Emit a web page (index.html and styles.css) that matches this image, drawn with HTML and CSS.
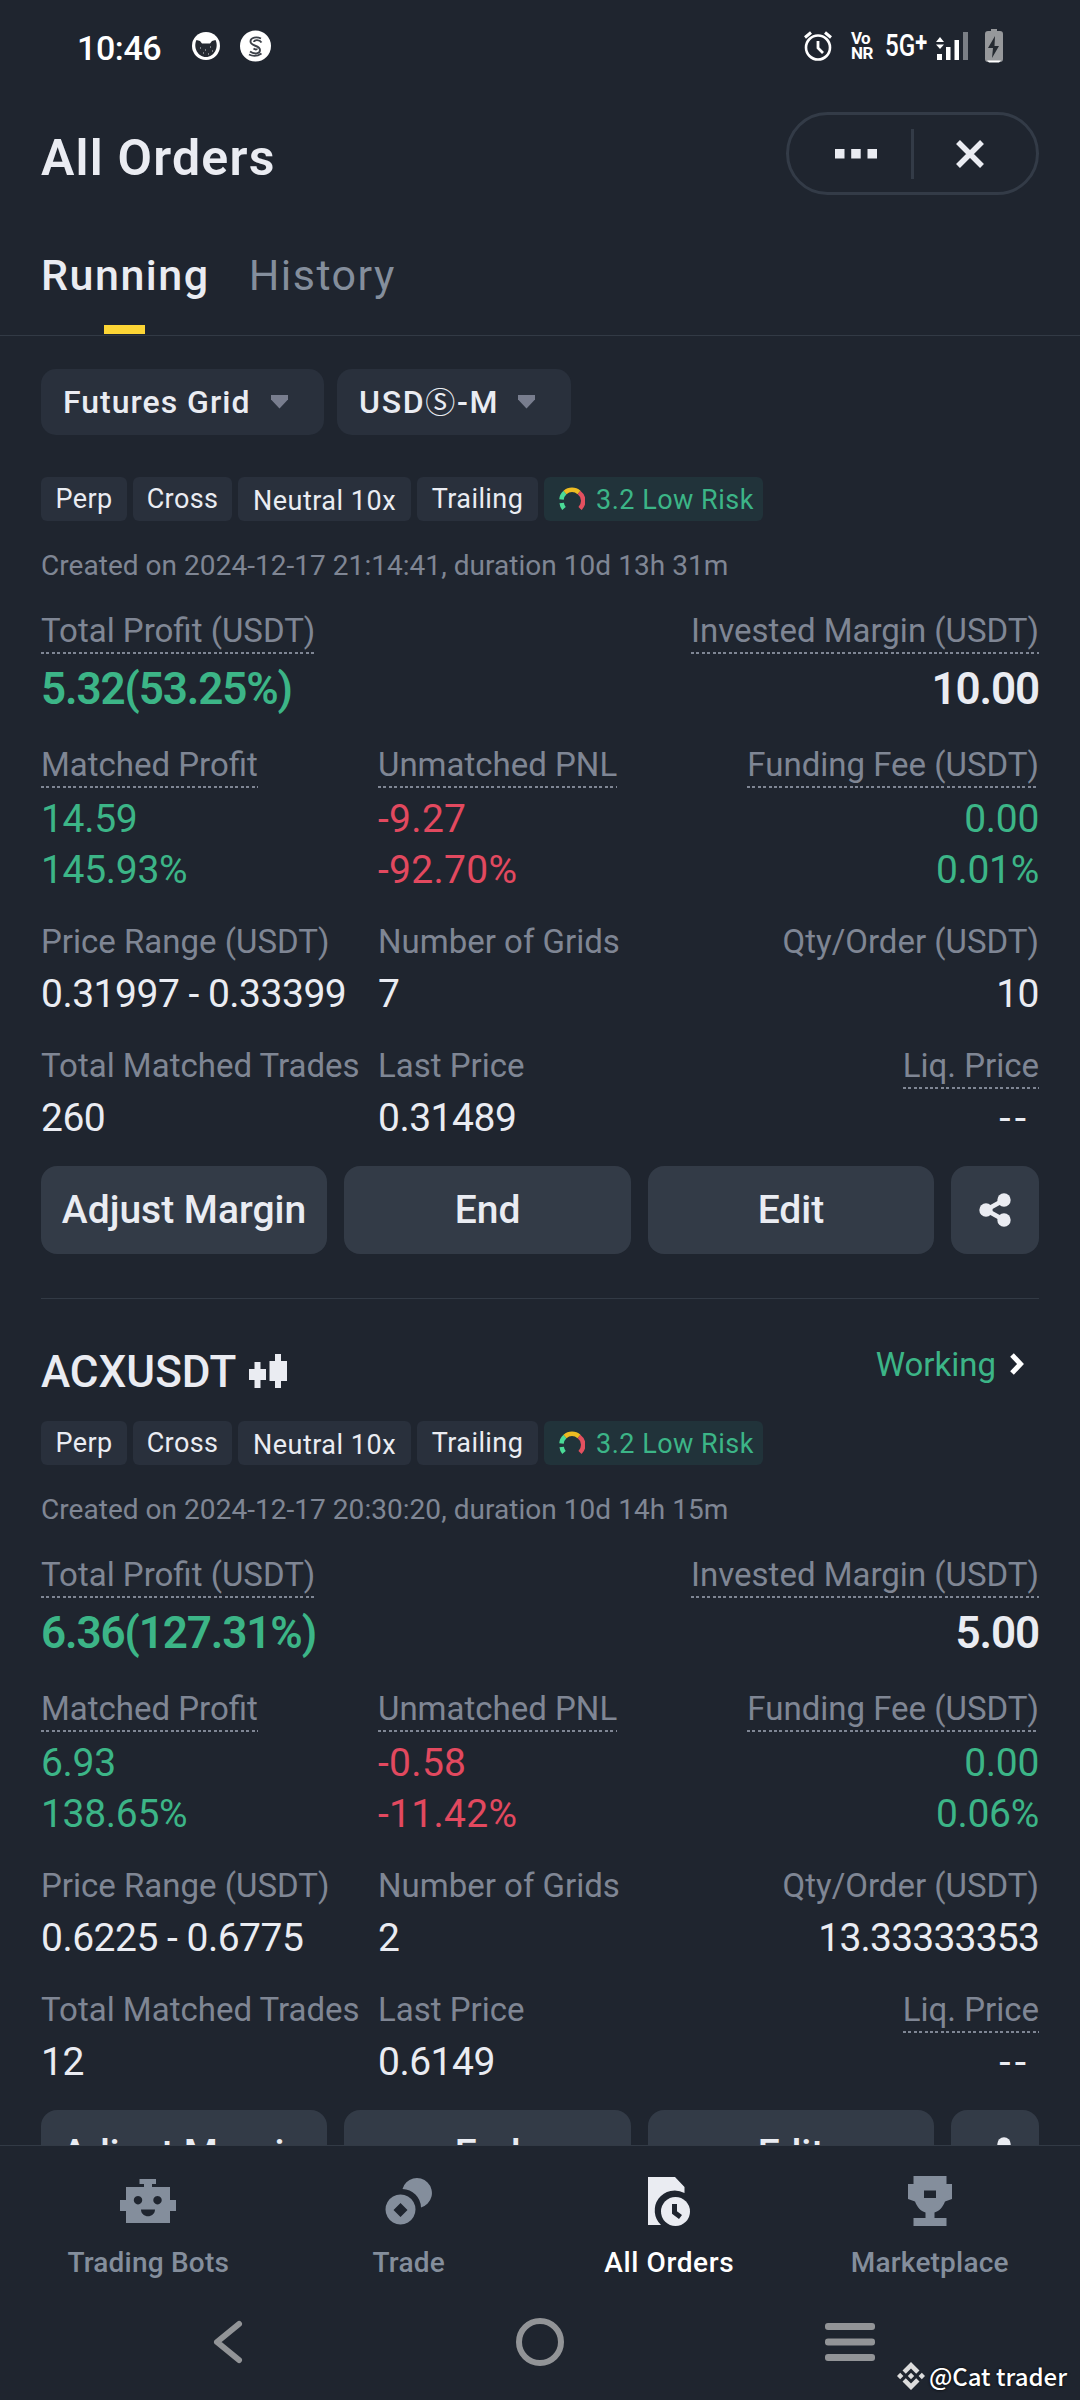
FILE: index.html
```html
<!DOCTYPE html>
<html lang="en">
<head>
    <meta charset="UTF-8">
    <meta name="viewport" content="width=device-width, initial-scale=1.0">
    <title>All Orders</title>
    <link rel="stylesheet" href="styles.css">
</head>
<body>
    <!-- Status bar -->
    <div class="status-bar">
        <span class="clock">10:46</span>
        <svg class="cat-icon" width="28" height="30" viewBox="0 0 28 30">
            <circle cx="14" cy="15" r="14" fill="#fff"/>
            <path d="M4.500 9l3.500 1 2 2.500h8l2-2.500 3.500-1c3.500 7-1 17-9.500 17S1 16 4.500 9z" fill="#252a32"/>
            <path d="M8 17h1M13 19h1M18 16h1M11 22h1M16 23h1M20 20h1" stroke="#cfd1d4" stroke-width="1.200"/>
        </svg>
        <svg class="coin-icon" width="31" height="32" viewBox="0 0 31 32">
            <circle cx="15.500" cy="16" r="15.500" fill="#fff"/>
            <path d="M21 8.500C17 6.500 10.500 7 10.500 11.500c0 5 9.500 3.500 9.500 8.500 0 4-6 4.500-10 1.500M21.500 12.500c-2-3-7.500-3-7.500-.6M9 24.500c4 2 8 2 12.500-1M13.500 18.500c2 1.500 3.500 1 3.500 0" fill="none" stroke="#3c4149" stroke-width="1.900"/>
        </svg>
        <div class="status-right">
            <svg width="28" height="30" viewBox="0 0 28 30" fill="none" stroke="#fff">
                <circle cx="14" cy="16.500" r="12" stroke-width="2.600"/>
                <path d="M14 10v7l5 5" stroke-width="2.800"/>
                <path d="M1 6.500 7 1.500M27 6.500 21 1.500" stroke-width="3"/>
            </svg>
            <div class="vonr"><span>Vo</span><span>NR</span></div>
            <span class="net">5G<b>+</b></span>
            <svg class="signal" width="32" height="29" viewBox="0 0 32 29" fill="#fff">
                <path d="M0 10l4-5 4 5zM0 12.500h8l-4 4.500z"/>
                <path d="M1 22h5v6H1zM10 15h4.500v13H10zM18.500 8H23v20h-4.500z"/>
                <path d="M27 0h5v28h-5z" fill="#7a7e85"/>
            </svg>
            <svg class="battery" width="18" height="34" viewBox="0 0 18 34">
                <path d="M6 0h6v2h3a3 3 0 0 1 3 3v25a3 3 0 0 1-3 3H3a3 3 0 0 1-3-3V5a3 3 0 0 1 3-3h3z" fill="#96989b"/>
                <path d="M2 31.500h14l-2 2H4z" fill="#fff"/>
                <path d="M10 7 3 19h5l-1 10 7-12H9.500z" fill="#252a31"/>
            </svg>
        </div>
    </div>

    <!-- Page header -->
    <div class="header">
        <h1>All Orders</h1>
        <div class="capsule">
            <svg class="dots" width="42" height="10" viewBox="0 0 42 10" fill="#eaecf2"><path d="M0 0h9.500v9.500H0zM16.200 0h9.500v9.500h-9.500zM32.500 0H42v9.500h-9.500z"/></svg>
            <span class="capsule-line"></span>
            <svg class="close" width="28" height="28" viewBox="0 0 28 28"><path d="M2 2l24 24M26 2L2 26" stroke="#eaecf2" stroke-width="5.500"/></svg>
        </div>
    </div>

    <div class="tabs">
        <div class="tab active">Running</div>
        <div class="tab">History</div>
    </div>

    <div class="content">
        <div class="filters">
            <div class="filter filter-type"><span>Futures Grid</span><svg width="17" height="14" viewBox="0 0 17 14"><path d="M0 0h17v4.500L8.500 13.500 0 4.500z" fill="#787d8e"/></svg></div>
            <div class="filter filter-coin"><span>USD<i>Ⓢ</i>-M</span><svg width="17" height="14" viewBox="0 0 17 14"><path d="M0 0h17v4.500L8.500 13.500 0 4.500z" fill="#787d8e"/></svg></div>
        </div>

        <div class="card">
            <div class="tags">
                <span class="tag perp">Perp</span>
                <span class="tag cross">Cross</span>
                <span class="tag low neutral">Neutral 10x</span>
                <span class="tag trailing">Trailing</span>
                <span class="tag low risk">
                    <svg width="26" height="24" viewBox="0 0 26 24" fill="none" stroke-width="4.500">
                        <path d="M5 21.500A10.500 10.500 0 0 1 2.700 16" stroke="#4bdb97"/>
                        <path d="M2.500 12.500A10.500 10.500 0 0 1 6 5.500" stroke="#4bdb97"/>
                        <path d="M6 5.500A10.500 10.500 0 0 1 20 5.500" stroke="#eebc22"/>
                        <path d="M20 5.500A10.500 10.500 0 0 1 21 21.500" stroke="#e3505f"/>
                    </svg>
                    <em>3.2 Low Risk</em>
                </span>
            </div>
            <p class="created">Created on 2024-12-17 21:14:41, duration 10d 13h 31m</p>

            <div class="row totals">
                <div class="cell"><span class="label dashed">Total Profit (USDT)</span><span class="value green">5.32(53.25%)</span></div>
                <div class="cell right"><span class="label dashed">Invested Margin (USDT)</span><span class="value">10.00</span></div>
            </div>
            <div class="row pnl">
                <div class="cell"><span class="label dashed">Matched Profit</span><span class="value green">14.59</span><span class="value green">145.93%</span></div>
                <div class="cell"><span class="label dashed">Unmatched PNL</span><span class="value red">-9.27</span><span class="value red">-92.70%</span></div>
                <div class="cell right"><span class="label dashed">Funding Fee (USDT)</span><span class="value green">0.00</span><span class="value green">0.01%</span></div>
            </div>
            <div class="row">
                <div class="cell"><span class="label">Price Range (USDT)</span><span class="value">0.31997 - 0.33399</span></div>
                <div class="cell"><span class="label">Number of Grids</span><span class="value">7</span></div>
                <div class="cell right"><span class="label">Qty/Order (USDT)</span><span class="value">10</span></div>
            </div>
            <div class="row">
                <div class="cell"><span class="label">Total Matched Trades</span><span class="value">260</span></div>
                <div class="cell"><span class="label">Last Price</span><span class="value">0.31489</span></div>
                <div class="cell right"><span class="label dashed">Liq. Price</span><span class="value none">--</span></div>
            </div>

            <div class="actions">
                <button>Adjust Margin</button>
                <button>End</button>
                <button>Edit</button>
                <button class="share"><svg width="32" height="34" viewBox="0 0 32 34" fill="#eaecf2"><path d="M25 7 7 17l18 10" fill="none" stroke="#eaecf2" stroke-width="4.500"/><circle cx="25" cy="7" r="6.700"/><circle cx="7" cy="17" r="6.700"/><circle cx="25" cy="27" r="6.700"/></svg></button>
            </div>
        </div>

        <div class="card">
            <div class="card-head">
                <h2>ACXUSDT</h2>
                <svg class="candles" width="38" height="34" viewBox="0 0 38 34" fill="#eaecf2"><path d="M5.500 8h6v7H17v11h-5.500v8h-6v-8H0V15h5.500zM26 0h6v7h6v20h-6v7h-6v-7h-5.500V7H26z"/></svg>
                <span class="working">Working</span>
                <svg class="chevron" width="14" height="22" viewBox="0 0 14 22"><path d="M2 2l8.500 9L2 20" fill="none" stroke="#fff" stroke-width="5"/></svg>
            </div>
            <div class="tags">
                <span class="tag perp">Perp</span>
                <span class="tag cross">Cross</span>
                <span class="tag low neutral">Neutral 10x</span>
                <span class="tag trailing">Trailing</span>
                <span class="tag low risk">
                    <svg width="26" height="24" viewBox="0 0 26 24" fill="none" stroke-width="4.500">
                        <path d="M5 21.500A10.500 10.500 0 0 1 2.700 16" stroke="#4bdb97"/>
                        <path d="M2.500 12.500A10.500 10.500 0 0 1 6 5.500" stroke="#4bdb97"/>
                        <path d="M6 5.500A10.500 10.500 0 0 1 20 5.500" stroke="#eebc22"/>
                        <path d="M20 5.500A10.500 10.500 0 0 1 21 21.500" stroke="#e3505f"/>
                    </svg>
                    <em>3.2 Low Risk</em>
                </span>
            </div>
            <p class="created">Created on 2024-12-17 20:30:20, duration 10d 14h 15m</p>

            <div class="row totals">
                <div class="cell"><span class="label dashed">Total Profit (USDT)</span><span class="value green">6.36(127.31%)</span></div>
                <div class="cell right"><span class="label dashed">Invested Margin (USDT)</span><span class="value">5.00</span></div>
            </div>
            <div class="row pnl">
                <div class="cell"><span class="label dashed">Matched Profit</span><span class="value green">6.93</span><span class="value green">138.65%</span></div>
                <div class="cell"><span class="label dashed">Unmatched PNL</span><span class="value red">-0.58</span><span class="value red">-11.42%</span></div>
                <div class="cell right"><span class="label dashed">Funding Fee (USDT)</span><span class="value green">0.00</span><span class="value green">0.06%</span></div>
            </div>
            <div class="row">
                <div class="cell"><span class="label">Price Range (USDT)</span><span class="value">0.6225 - 0.6775</span></div>
                <div class="cell"><span class="label">Number of Grids</span><span class="value">2</span></div>
                <div class="cell right"><span class="label">Qty/Order (USDT)</span><span class="value long">13.33333353</span></div>
            </div>
            <div class="row">
                <div class="cell"><span class="label">Total Matched Trades</span><span class="value">12</span></div>
                <div class="cell"><span class="label">Last Price</span><span class="value">0.6149</span></div>
                <div class="cell right"><span class="label dashed">Liq. Price</span><span class="value none">--</span></div>
            </div>

            <div class="actions">
                <button>Adjust Margin</button>
                <button>End</button>
                <button>Edit</button>
                <button class="share"><svg width="32" height="34" viewBox="0 0 32 34" fill="#eaecf2"><path d="M25 7 7 17l18 10" fill="none" stroke="#eaecf2" stroke-width="4.500"/><circle cx="25" cy="7" r="6.700"/><circle cx="7" cy="17" r="6.700"/><circle cx="25" cy="27" r="6.700"/></svg></button>
            </div>
        </div>
    </div>

    <!-- Bottom navigation -->
    <div class="bottom-nav">
        <div class="nav-item">
            <svg width="56" height="50" viewBox="0 0 56 50" fill="#848e9c">
                <path fill-rule="evenodd" d="M19.500 3H36v5h-4v3h18v13h6v11h-6v12H6V35H0V24h6V11h18V8h-4.500zM18 20a4.200 4.200 0 1 0 .01 0zM37.500 20a4.200 4.200 0 1 0 .01 0zM21 33.500c0 9 14 9 14 0z"/>
            </svg>
            <span>Trading Bots</span>
        </div>
        <div class="nav-item">
            <svg width="48" height="50" viewBox="0 0 48 50" fill="#848e9c">
                <path fill-rule="evenodd" d="M15.500 18.500a15 15 0 1 0 .01 0zM15.500 27l7 7-7 7-7-7z"/>
                <path d="M17.500 13A15 15 0 1 1 36 31.500 19 19 0 0 0 17.500 13z"/>
            </svg>
            <span>Trade</span>
        </div>
        <div class="nav-item active">
            <svg width="44" height="50" viewBox="0 0 44 50" fill="#eaecf2">
                <path d="M1 1h27l9.500 10v6A20 20 0 0 0 14 49H1z"/>
                <circle cx="28.500" cy="35.500" r="17.500" fill="#1f252f"/>
                <circle cx="28.500" cy="35.500" r="14.500"/>
                <path d="M27.500 28v8.500l6 4.500" fill="none" stroke="#1f252f" stroke-width="5"/>
            </svg>
            <span>All Orders</span>
        </div>
        <div class="nav-item">
            <svg width="44" height="50" viewBox="0 0 44 50" fill="#848e9c">
                <path fill-rule="evenodd" d="M5.500 0h33v8H44v15l-7 2.500c-2.500 6-5.500 9.500-10.500 11V42h12v8h-33v-8h12v-5.500c-5-1.500-8-5-10.500-11L0 23V8h5.500zM16 14.500v7.500h12v-7.500z"/>
            </svg>
            <span>Marketplace</span>
        </div>
    </div>

    <!-- System navigation -->
    <div class="system-nav">
        <svg class="back" width="30" height="44" viewBox="0 0 30 44"><path d="M26 4 4 22l22 18" fill="none" stroke="#929497" stroke-width="6" stroke-linecap="round" stroke-linejoin="round"/></svg>
        <svg class="home" width="48" height="48" viewBox="0 0 48 48"><circle cx="24" cy="24" r="21" fill="none" stroke="#929497" stroke-width="6"/></svg>
        <svg class="menu" width="50" height="38" viewBox="0 0 50 38" fill="#929497"><rect width="50" height="7" rx="3"/><rect y="15.500" width="50" height="7" rx="3"/><rect y="31" width="50" height="7" rx="3"/></svg>
    </div>

    <div class="watermark">
        <svg width="28" height="28" viewBox="0 0 28 28" fill="#dcdcdc"><path d="M14 0l8.500 8.500-3.300 3.300L14 6.600l-5.200 5.200-3.300-3.300zM3.200 10.800 6.400 14l-3.200 3.200L0 14zM24.800 10.800 28 14l-3.200 3.200-3.200-3.200zM14 10.800l3.200 3.200-3.200 3.200-3.200-3.200zM8.800 16.200l5.200 5.200 5.200-5.200 3.300 3.300L14 28l-8.500-8.500z"/></svg>
        <span>@Cat trader</span>
    </div>
</body>
</html>
```
FILE: styles.css
```css
/* General Body Style */
* {
    box-sizing: border-box;
}

body {
    font-family: 'Roboto', 'Liberation Sans', sans-serif;
    margin: 0;
    width: 1080px;
    height: 2400px;
    background: #1f252f;
    color: #eaecf2;
    display: flex;
    flex-direction: column;
    overflow: hidden;
    position: relative;
}

svg {
    display: block;
    flex: none;
}

h1,
h2,
p {
    margin: 0;
}

/* Status bar */
.status-bar {
    height: 92px;
    padding: 0 77px 0 77px;
    display: flex;
    align-items: center;
    color: #fff;
}

.clock {
    font-size: 34px;
    font-weight: 500;
    width: 115px;
    line-height: 40px;
    letter-spacing: -0.4px;
    margin-top: 3px;
}

.coin-icon {
    margin-left: 20px;
}

.status-right {
    display: flex;
    align-items: center;
    margin-left: auto;
}

.vonr {
    display: flex;
    flex-direction: column;
    font-size: 17px;
    font-weight: 700;
    line-height: 15px;
    margin-left: 19px;
    width: 24px;
    letter-spacing: -0.6px;
}

.net {
    font-size: 31px;
    font-weight: 500;
    line-height: 36px;
    margin-left: 10px;
    width: 42px;
    white-space: nowrap;
    transform: scaleX(0.78);
    transform-origin: left;
}

.net b {
    font-size: 28px;
    line-height: 1;
    vertical-align: 4px;
}

.signal {
    margin-left: 9px;
}

.battery {
    margin-left: 17px;
}

/* Header */
.header {
    display: flex;
    justify-content: space-between;
    padding: 20px 41px 0;
    height: 152px;
}

h1 {
    font-size: 50px;
    font-weight: 600;
    line-height: 60px;
    letter-spacing: 1.2px;
    margin-top: 16px;
}

.capsule {
    width: 253px;
    height: 83px;
    border: 3px solid #333b47;
    border-radius: 42px;
    display: flex;
    align-items: center;
    padding-left: 46px;
}

.capsule-line {
    width: 3px;
    height: 50px;
    background: #333b47;
    margin: 0 42px 0 34px;
}

/* Tabs */
.tabs {
    display: flex;
    height: 92px;
    padding-left: 41px;
    gap: 39px;
    border-bottom: 1px solid #323a45;
}

.tab {
    font-size: 43px;
    font-weight: 400;
    line-height: 62px;
    letter-spacing: 1.5px;
    color: #848e9c;
    height: 90px;
}

.tab.active {
    font-weight: 500;
    color: #eaecf2;
    display: flex;
    flex-direction: column;
    justify-content: space-between;
    align-items: center;
}

.tab.active::after {
    content: "";
    width: 41px;
    height: 9px;
    margin-right: 2px;
    background: #fcd535;
}

/* Scroll area */
.content {
    height: 1809px;
    overflow: hidden;
    padding: 33px 41px 0;
}

.filters {
    display: flex;
    gap: 13px;
    margin-bottom: 42px;
}

.filter {
    display: flex;
    align-items: center;
    justify-content: space-between;
    height: 66px;
    padding: 0 36px 0 22px;
    border-radius: 15px;
    background: #29303c;
    font-size: 32px;
    font-weight: 500;
    letter-spacing: 1px;
    white-space: nowrap;
}

.filter-type {
    width: 283px;
}

.filter-coin {
    width: 234px;
    letter-spacing: 1.7px;
}

.filter i {
    font-family: 'Noto Sans CJK SC', 'DejaVu Sans', sans-serif;
    font-style: normal;
    font-weight: 400;
    font-size: 30px;
    line-height: 1;
}

/* Order cards */
.card + .card {
    border-top: 1px solid #323a45;
    margin-top: 44px;
    padding-top: 48px;
}

.card-head {
    display: flex;
    height: 50px;
    margin-bottom: 24px;
}

h2 {
    font-size: 44px;
    font-weight: 500;
    line-height: 50px;
}

.candles {
    margin: 7px auto 0 13px;
}

.working {
    font-size: 33px;
    line-height: 40px;
    margin-top: -2px;
    color: #3cb587;
}

.chevron {
    margin: 6px 15px 0 14px;
}

.tags {
    display: flex;
    gap: 6px;
}

.tag {
    height: 44px;
    line-height: 45px;
    border-radius: 6px;
    background: #29303c;
    font-size: 27px;
    letter-spacing: 0.4px;
    text-align: center;
    white-space: nowrap;
}

.tag.low {
    line-height: 49px;
    letter-spacing: 0.5px;
}

.perp {
    width: 86px;
}

.cross {
    width: 99px;
}

.neutral {
    width: 173px;
}

.trailing {
    width: 121px;
}

.risk {
    width: 219px;
    display: flex;
    align-items: center;
    padding-left: 15px;
    gap: 11px;
    background: #21333a;
    color: #3cb587;
}

.risk em {
    font-style: normal;
    margin-top: 3px;
}

.created {
    font-size: 28px;
    line-height: 40px;
    letter-spacing: 0.04px;
    margin: 25px 0 0;
    color: #7f8694;
    white-space: nowrap;
}

.row {
    display: grid;
    grid-template-columns: 337px 300px 361px;
    margin-top: 26px;
}

.totals {
    grid-template-columns: 1fr 1fr;
    margin-top: 25px;
}

.pnl {
    margin-top: 31px;
}

.cell {
    display: flex;
    flex-direction: column;
    align-items: flex-start;
    white-space: nowrap;
}

.cell.right {
    align-items: flex-end;
}

.label {
    font-size: 33px;
    line-height: 40px;
    height: 43px;
    margin-bottom: 4px;
    color: #7f8694;
}

.dashed {
    background: repeating-linear-gradient(90deg, #7f8694 0 3px, transparent 3px 5.4px) left bottom / 100% 2px no-repeat;
}

.value {
    font-size: 39px;
    line-height: 51px;
    letter-spacing: -0.5px;
}

.value.long {
    letter-spacing: -0.8px;
}

.totals .label {
    margin-bottom: 10px;
}

.totals .value {
    font-size: 44px;
    font-weight: 600;
    line-height: 50px;
    letter-spacing: -1.1px;
}

.pnl .label {
    margin-bottom: 6px;
}

.pnl .value {
    letter-spacing: -0.3px;
}

.green {
    color: #3cb587;
}

.red {
    color: #e2495f;
}

.pnl .red {
    letter-spacing: 0.3px;
}

.value.none {
    font-size: 41px;
    letter-spacing: 4px;
    padding-right: 9px;
}

/* Buttons */
.actions {
    display: grid;
    grid-template-columns: 286px 287px 286px 88px;
    gap: 17px;
    margin-top: 22px;
}

button {
    font-family: inherit;
    font-size: 39px;
    font-weight: 500;
    color: #eaecf2;
    height: 88px;
    padding: 0;
    border: none;
    border-radius: 16px;
    background: #333b47;
    display: flex;
    align-items: center;
    justify-content: center;
    white-space: nowrap;
}

/* Bottom navigation */
.bottom-nav {
    display: flex;
    height: 150px;
    padding: 30px 20px 0 18px;
    border-top: 1px solid #323a45;
}

.nav-item {
    flex: 1;
    display: flex;
    flex-direction: column;
    align-items: center;
    font-size: 28px;
    font-weight: 500;
    line-height: 40px;
    letter-spacing: 0.2px;
    gap: 17px;
    color: #848e9c;
}

.nav-item.active {
    color: #fff;
    letter-spacing: 0.6px;
}

.system-nav {
    display: flex;
    align-items: center;
    justify-content: space-between;
    height: 94px;
    padding: 0 205px 0 213px;
}

.home {
    margin-left: 12px;
}

/* Author mark over the system bar */
.watermark {
    position: absolute;
    right: 13px;
    bottom: 6px;
    display: flex;
    align-items: center;
    gap: 4px;
    font-family: 'Noto Sans CJK SC', sans-serif;
    font-size: 24px;
    font-weight: 500;
    line-height: 36px;
    color: #fff;
    text-shadow: 0 0 3px #000;
}
```
